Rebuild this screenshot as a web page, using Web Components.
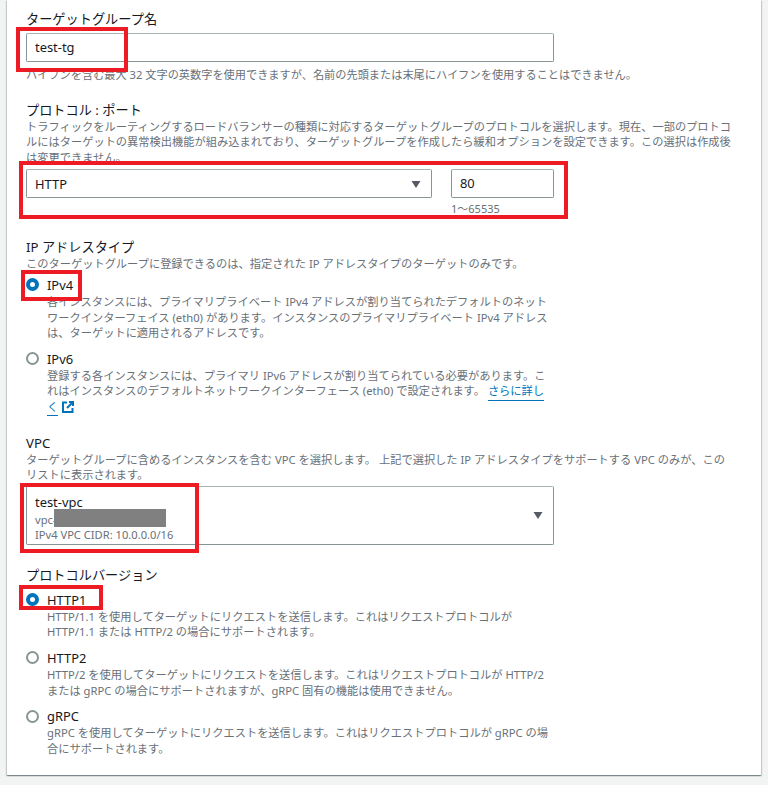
<!DOCTYPE html>
<html lang="ja">
<head>
<meta charset="utf-8">
<title>Target group</title>
<style>
  html, body { margin: 0; height: 100%; overflow: hidden; background: #f2f3f3; }
  body { font-family: "Noto Sans", "Noto Sans CJK JP", sans-serif; color: #16191f; }
</style>
</head>
<body>
<tg-page>
  <tg-field label="ターゲットグループ名" control-gap="5">
    <tg-input value="test-tg"></tg-input>
    <span slot="hint">ハイフンを含む最大 32 文字の英数字を使用できますが、名前の先頭または末尾にハイフンを使用することはできません。</span>
  </tg-field>

  <tg-field label="プロトコル : ポート" control-gap="1">
    <span slot="desc">トラフィックをルーティングするロードバランサーの種類に対応するターゲットグループのプロトコルを選択します。現在、一部のプロトコ<br>ルにはターゲットの異常検出機能が組み込まれており、ターゲットグループを作成したら緩和オプションを設定できます。この選択は作成後<br>は変更できません。</span>
    <tg-port-row>
      <tg-select>HTTP</tg-select>
      <tg-input slot="port" value="80"></tg-input>
      <span slot="range">1～65535</span>
    </tg-port-row>
  </tg-field>

  <tg-field label="IP アドレスタイプ" control-gap="1">
    <span slot="desc">このターゲットグループに登録できるのは、指定された IP アドレスタイプのターゲットのみです。</span>
    <tg-radio-group>
      <tg-radio checked label="IPv4">各インスタンスには、プライマリプライベート IPv4 アドレスが割り当てられたデフォルトのネット<br>ワークインターフェイス (eth0) があります。インスタンスのプライマリプライベート IPv4 アドレス<br>は、ターゲットに適用されるアドレスです。</tg-radio>
      <tg-radio label="IPv6">登録する各インスタンスには、プライマリ IPv6 アドレスが割り当てられている必要があります。こ<br>れはインスタンスのデフォルトネットワークインターフェース (eth0) で設定されます。<tg-link>さらに詳し<br>く</tg-link></tg-radio>
    </tg-radio-group>
  </tg-field>

  <tg-field label="VPC" control-gap="0">
    <span slot="desc">ターゲットグループに含めるインスタンスを含む VPC を選択します。 上記で選択した IP アドレスタイプをサポートする VPC のみが、この<br>リストに表示されます。</span>
    <tg-vpc-select name="test-vpc" prefix="vpc-" cidr="IPv4 VPC CIDR: 10.0.0.0/16"></tg-vpc-select>
  </tg-field>

  <tg-field label="プロトコルバージョン" control-gap="7" style="margin-top:2px">
    <tg-radio-group>
      <tg-radio checked label="HTTP1">HTTP/1.1 を使用してターゲットにリクエストを送信します。これはリクエストプロトコルが<br>HTTP/1.1 または HTTP/2 の場合にサポートされます。</tg-radio>
      <tg-radio label="HTTP2">HTTP/2 を使用してターゲットにリクエストを送信します。これはリクエストプロトコルが HTTP/2<br>または gRPC の場合にサポートされますが、gRPC 固有の機能は使用できません。</tg-radio>
      <tg-radio label="gRPC">gRPC を使用してターゲットにリクエストを送信します。これはリクエストプロトコルが gRPC の場<br>合にサポートされます。</tg-radio>
    </tg-radio-group>
  </tg-field>

  <tg-mark slot="marks" x="16" y="27" w="112" h="45"></tg-mark>
  <tg-mark slot="marks" x="19" y="161" w="549" h="58"></tg-mark>
  <tg-mark slot="marks" x="21" y="270" w="61" h="31"></tg-mark>
  <tg-mark slot="marks" x="20" y="483" w="179" h="70"></tg-mark>
  <tg-mark slot="marks" x="19" y="585" w="84" h="25"></tg-mark>
</tg-page>

<script>
  'use strict';

  function define(name, css, html, observed) {
    customElements.define(name, class extends HTMLElement {
      constructor() {
        super();
        this.attachShadow({ mode: 'open' }).innerHTML =
          '<style>' + css + '</style>' + html;
      }
      connectedCallback() {
        if (observed) observed(this, this.shadowRoot);
      }
    });
  }

  define('tg-page', `
    :host { display: block; position: relative; width: 768px; height: 785px; box-sizing: border-box; padding: 0 7px; }
    .card {
      box-sizing: border-box; height: 775px; background: #fff; padding: 10px 19px 0;
      display: flex; flex-direction: column; gap: 19px;
      box-shadow: 0 1px 1px 0 rgba(0,28,36,.3), 1px 1px 1px 0 rgba(0,28,36,.15), -1px 1px 1px 0 rgba(0,28,36,.15);
    }
  `, '<div class="card"><slot></slot></div><slot name="marks"></slot>');

  define('tg-field', `
    :host { display: block; }
    .label { font-size: 13.2px; line-height: 18px; }
    .desc, .hint { font-size: 11.24px; line-height: 15.6px; color: #687078; white-space: nowrap; }
    .desc { margin-bottom: 3px; }
    .hint { font-size: 11.2px; margin: 5px 0 -1px; }
  `, `
    <div class="label"></div>
    <div class="desc"><slot name="desc"></slot></div>
    <div class="control"><slot></slot></div>
    <div class="hint"><slot name="hint"></slot></div>
  `, (el, root) => {
    root.querySelector('.label').textContent = el.getAttribute('label');
    root.querySelector('.control').style.paddingTop = el.getAttribute('control-gap') + 'px';
    if (!el.querySelector('[slot=desc]')) root.querySelector('.desc').style.display = 'none';
    if (!el.querySelector('[slot=hint]')) root.querySelector('.hint').style.display = 'none';
  });

  const boxCss = `
    box-sizing: border-box; height: 29px; width: 100%; background: #fff;
    border: 1px solid #879596; border-top-color: #aab7b8; border-radius: 2px;
    font-size: 12.9px; color: #16191f;
  `;

  define('tg-input', `
    :host { display: block; max-width: 528px; }
    .box { ${boxCss} padding: 0 8px; line-height: 27px; }
  `, '<div class="box"></div>', (el, root) => {
    root.querySelector('.box').textContent = el.getAttribute('value');
  });

  const caret = '<svg width="10" height="7" viewBox="0 0 10 7"><path d="M0.5 0H9.5L5 7Z" fill="#545b64"/></svg>';

  define('tg-select', `
    :host { display: block; }
    .box { ${boxCss} padding: 0 10px 0 8px; display: flex; align-items: center; justify-content: space-between; }
    svg { display: block; margin-top: 2px; }
  `, '<div class="box"><span><slot></slot></span>' + caret + '</div>');

  define('tg-port-row', `
    :host { display: grid; grid-template-columns: 406px 103px; column-gap: 19px; row-gap: 3px; }
    .range { grid-column: 2; font-size: 11px; line-height: 16px; padding-bottom: 2px; color: #687078; }
  `, `
    <slot></slot>
    <slot name="port"></slot>
    <div class="range"><slot name="range"></slot></div>
  `);

  define('tg-radio-group', `
    :host { display: flex; flex-direction: column; gap: 9px; }
  `, '<slot></slot>');

  define('tg-radio', `
    :host { display: grid; grid-template-columns: 13px 1fr; column-gap: 8px; }
    .dot { box-sizing: border-box; width: 13px; height: 13px; margin-top: 2.5px; border-radius: 50%; border: 2px solid #879596; background: #fff; }
    :host([checked]) .dot { border: 4px solid #0073bb; }
    .label { font-size: 12.9px; line-height: 18px; }
    .text { grid-column: 2; font-size: 11.24px; line-height: 15.6px; color: #687078; white-space: nowrap; }
  `, `
    <div class="dot"></div>
    <div class="label"></div>
    <div class="text"><slot></slot></div>
  `, (el, root) => {
    root.querySelector('.label').textContent = el.getAttribute('label');
  });

  define('tg-link', `
    :host { display: inline; color: #0073bb; }
    span { border-bottom: 1px solid #0073bb; padding-bottom: 1.5px; }
    svg { vertical-align: -2px; margin-left: 4px; }
  `, `
    <span><slot></slot></span><svg width="12" height="12" viewBox="0 0 12 12" fill="none" stroke="#0073bb" stroke-width="2">
      <path d="M5 1.5H1V11H10.5V7"/><path d="M7 1H11V5M11 1L5 7"/>
    </svg>
  `);

  define('tg-vpc-select', `
    :host { display: block; max-width: 528px; }
    .box { ${boxCss} height: 59px; padding: 6px 10px 0 8px; display: flex; justify-content: space-between; }
    .name { line-height: 19px; }
    .sub { font-size: 11.15px; line-height: 15px; color: #687078; white-space: nowrap; }
    .redact { display: inline-block; width: 112px; height: 18px; background: #808080; vertical-align: middle; margin: -3px 0 -3px -2px; position: relative; top: -3px; }
    svg { align-self: center; margin-top: -6px; }
  `, `
    <div class="box">
      <div>
        <div class="name"></div>
        <div class="sub"><span class="prefix"></span><span class="redact"></span></div>
        <div class="sub cidr"></div>
      </div>
      ${caret}
    </div>
  `, (el, root) => {
    root.querySelector('.name').textContent = el.getAttribute('name');
    root.querySelector('.prefix').textContent = el.getAttribute('prefix');
    root.querySelector('.cidr').textContent = el.getAttribute('cidr');
  });

  // red annotation rectangles drawn on top of the screenshot
  define('tg-mark', `
    :host { display: block; position: absolute; box-sizing: border-box; border: 4px solid #ed1c24; pointer-events: none; }
  `, '', (el) => {
    el.style.left = el.getAttribute('x') + 'px';
    el.style.top = el.getAttribute('y') + 'px';
    el.style.width = el.getAttribute('w') + 'px';
    el.style.height = el.getAttribute('h') + 'px';
  });
</script>
</body>
</html>
